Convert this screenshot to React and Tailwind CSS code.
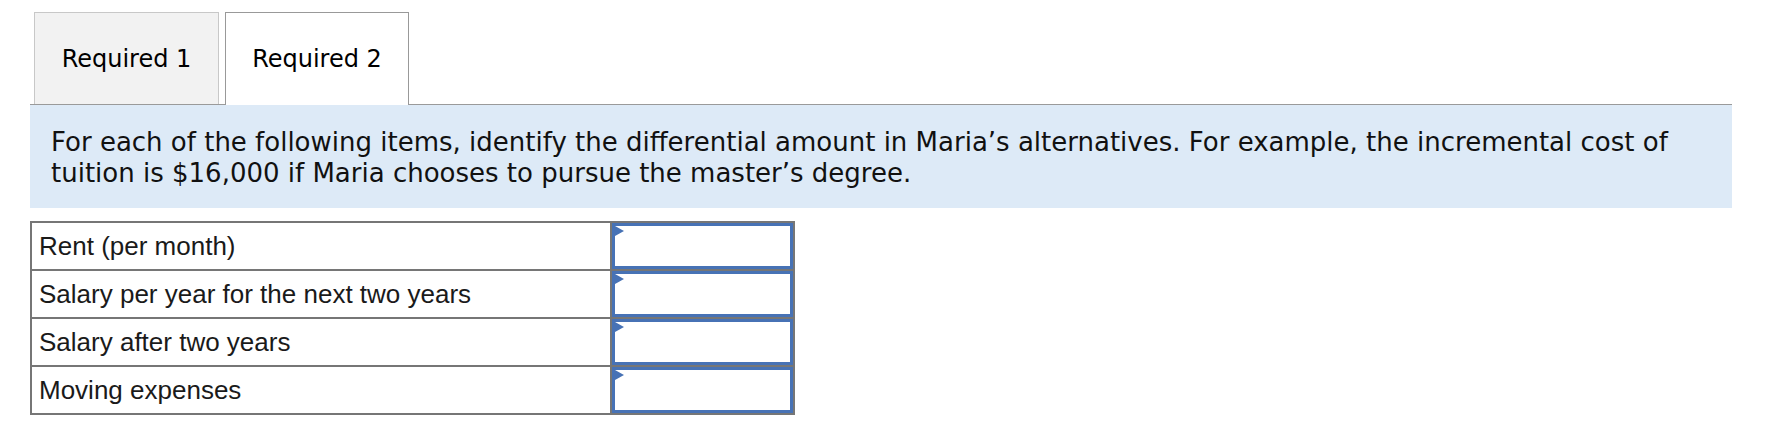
import React from "react";

const rows = [
  "Rent (per month)",
  "Salary per year for the next two years",
  "Salary after two years",
  "Moving expenses",
];

function InputCell() {
  return (
    <div className="relative h-full w-full border-[3px] border-[#4772b5] bg-white">
      <svg
        className="absolute left-0 top-0"
        width="9"
        height="10"
        viewBox="0 0 9 10"
      >
        <polygon points="0,0 9,5 0,10" fill="#4772b5" />
      </svg>
    </div>
  );
}

export default function App() {
  return (
    <div className="min-h-[422px] w-[1774px] bg-white pl-[30px] pt-[12px]">
      <div className="w-[1702px]">
        {/* Tabs */}
        <div
          className="flex items-end gap-[6px] border-b border-[#9a9a9a] pl-[4px]"
          style={{ fontFamily: '"DejaVu Sans", Verdana, sans-serif' }}
        >
          <div className="flex h-[92px] w-[185px] items-center justify-center border border-b-0 border-[#c8c8c8] bg-[#f2f2f2] text-[24px] text-black">
            Required 1
          </div>
          <div className="-mb-px flex h-[93px] w-[184px] items-center justify-center border border-b-0 border-[#999999] bg-white text-[24px] text-black">
            Required 2
          </div>
        </div>

        {/* Instruction panel */}
        <div
          className="bg-[#ddeaf7] px-[21px] pb-[19px] pt-[22px] text-[26px] leading-[31px] text-[#111]"
          style={{ fontFamily: '"DejaVu Sans", Verdana, sans-serif' }}
        >
          For each of the following items, identify the differential amount in
          Maria’s alternatives. For example, the incremental cost of tuition is
          $16,000 if Maria chooses to pursue the master’s degree.
        </div>
      </div>

      {/* Table */}
      <div
        className="mt-[13px] w-[765px] border-2 border-[#767676]"
        style={{ fontFamily: '"Liberation Sans", Arial, sans-serif' }}
      >
        {rows.map((label, i) => (
          <div
            key={label}
            className={
              i < rows.length - 1
                ? "flex h-[48px] border-b-2 border-[#767676]"
                : "flex h-[46px]"
            }
          >
            <div className="flex w-[580px] items-center border-r-2 border-[#767676] pl-[7px] text-[26px] text-[#1a1a1a]">
              {label}
            </div>
            <div className="flex-1">
              <InputCell />
            </div>
          </div>
        ))}
      </div>
    </div>
  );
}
